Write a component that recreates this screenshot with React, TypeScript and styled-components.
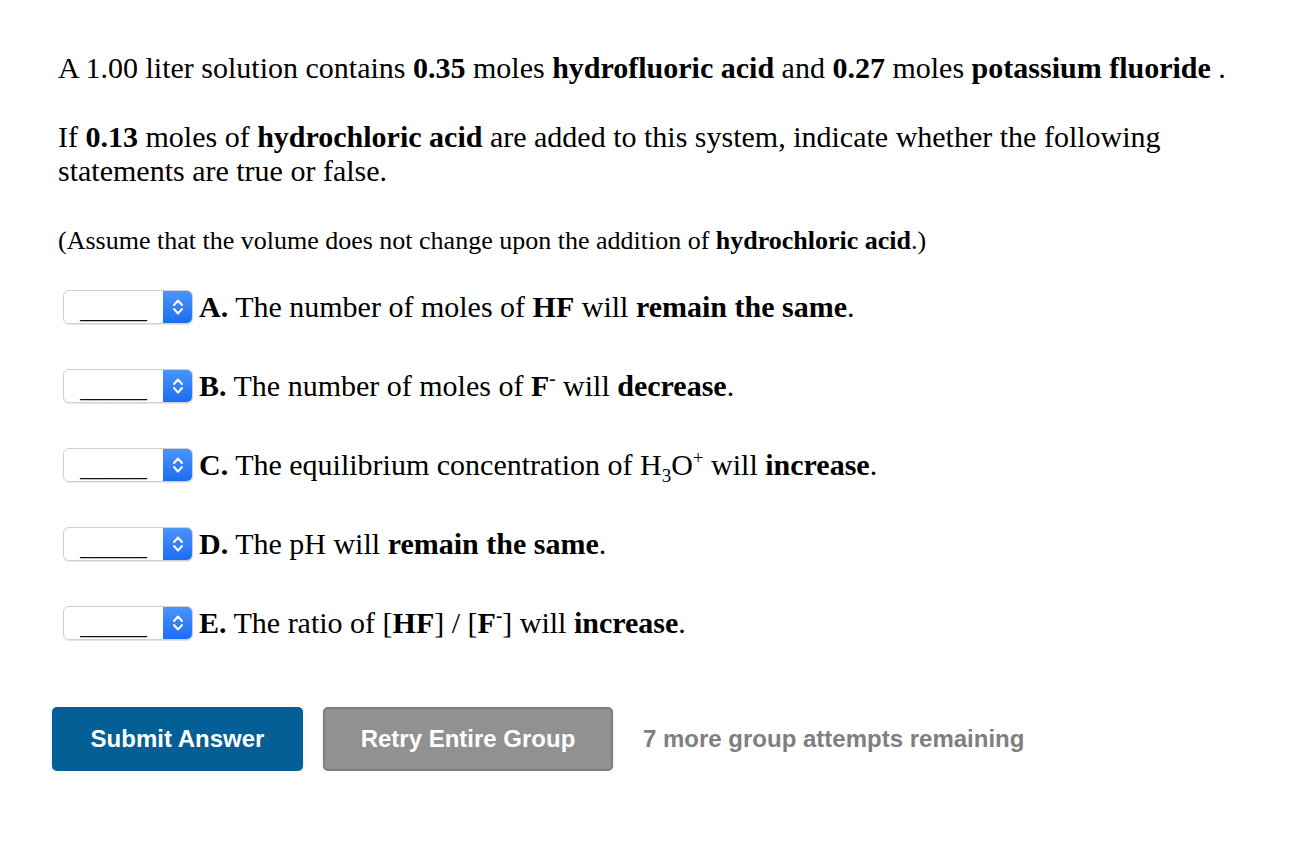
import styled, { createGlobalStyle } from "styled-components";

const GlobalStyle = createGlobalStyle`
  body {
    margin: 0;
    background: #ffffff;
    font-family: "Liberation Serif", "Times New Roman", serif;
    color: #000;
  }
`;

const Page = styled.div`
  padding: 51px 0 0 58px;
  width: 1180px;
`;

const Para = styled.p`
  margin: 0 0 35px;
  font-size: 30px;
  line-height: 34px;
`;

const Note = styled.p`
  margin: 38px 0 0;
  font-size: 26px;
  line-height: 30px;
`;

const List = styled.div`
  display: flex;
  flex-direction: column;
  gap: 45px;
  margin-top: 34px;
`;

const Row = styled.div`
  display: flex;
  align-items: center;
  gap: 6px;
  height: 34px;
`;

const SelectBox = styled.div`
  display: flex;
  width: 130px;
  height: 34px;
  margin-left: 5px;
  box-sizing: border-box;
  border: 1px solid #d0d0d0;
  border-radius: 6px;
  overflow: hidden;
  box-shadow: 0 1px 1px rgba(0, 0, 0, 0.1);
`;

const SelectValue = styled.div`
  flex: 1;
  display: flex;
  align-items: flex-end;
  justify-content: center;
  padding-bottom: 3px;
  font-family: "Liberation Sans", Arial, sans-serif;
  font-size: 20px;
  line-height: 20px;
  color: #111;
`;

const SelectArrow = styled.div`
  width: 29px;
  display: flex;
  align-items: center;
  justify-content: center;
  background: linear-gradient(#4d94fb, #1b6ef2);
`;

const Statement = styled.div`
  font-size: 30px;
  line-height: 34px;
  white-space: nowrap;
`;

const Sup = styled.sup<{ $bold?: boolean }>`
  font-size: 19px;
  line-height: 0;
  font-weight: ${(p) => (p.$bold ? "bold" : "normal")};
`;

const Sub = styled.sub`
  font-size: 19px;
  line-height: 0;
`;

const Actions = styled.div`
  display: flex;
  align-items: center;
  gap: 20px;
  margin-top: 67px;
  margin-left: -6px;
`;

const Button = styled.div<{ $primary?: boolean }>`
  display: flex;
  align-items: center;
  justify-content: center;
  width: ${(p) => (p.$primary ? "251px" : "290px")};
  height: 64px;
  box-sizing: border-box;
  border-radius: 5px;
  font-family: "Liberation Sans", Arial, sans-serif;
  font-weight: bold;
  font-size: 24px;
  color: #fff;
  background: ${(p) => (p.$primary ? "#035f96" : "#919191")};
  border: 2px solid ${(p) => (p.$primary ? "#035f96" : "#7f7f7f")};
  box-shadow: 0 1px 3px rgba(0, 0, 0, 0.15);
`;

const Remaining = styled.div`
  margin-left: 10px;
  font-family: "Liberation Sans", Arial, sans-serif;
  font-weight: bold;
  font-size: 24px;
  color: #7f7f7f;
`;

function Chevrons() {
  return (
    <svg width="14" height="24" viewBox="0 0 14 24">
      <path d="M3 10 L7 5.5 L11 10" stroke="#fff" strokeWidth="2" fill="none" strokeLinecap="round" strokeLinejoin="round" />
      <path d="M3 14 L7 18.5 L11 14" stroke="#fff" strokeWidth="2" fill="none" strokeLinecap="round" strokeLinejoin="round" />
    </svg>
  );
}

function App() {
  const statements = [
    {
      letter: "A.",
      text: (
        <>
          The number of moles of <b>HF</b> will <b>remain the same</b>.
        </>
      ),
    },
    {
      letter: "B.",
      text: (
        <>
          The number of moles of <b>F</b>
          <Sup $bold>-</Sup> will <b>decrease</b>.
        </>
      ),
    },
    {
      letter: "C.",
      text: (
        <>
          The equilibrium concentration of H<Sub>3</Sub>O<Sup>+</Sup> will{" "}
          <b>increase</b>.
        </>
      ),
    },
    {
      letter: "D.",
      text: (
        <>
          The pH will <b>remain the same</b>.
        </>
      ),
    },
    {
      letter: "E.",
      text: (
        <>
          The ratio of [<b>HF</b>] / [<b>F</b>
          <Sup $bold>-</Sup>] will <b>increase</b>.
        </>
      ),
    },
  ];

  return (
    <Page>
      <GlobalStyle />
      <Para>
        A 1.00 liter solution contains <b>0.35</b> moles <b>hydrofluoric acid</b> and{" "}
        <b>0.27</b> moles <b>potassium fluoride</b> .
      </Para>
      <Para>
        If <b>0.13</b> moles of <b>hydrochloric acid</b> are added to this system, indicate
        whether the following statements are true or false.
      </Para>
      <Note>
        (Assume that the volume does not change upon the addition of <b>hydrochloric acid</b>.)
      </Note>
      <List>
        {statements.map((s) => (
          <Row key={s.letter}>
            <SelectBox>
              <SelectValue>______</SelectValue>
              <SelectArrow>
                <Chevrons />
              </SelectArrow>
            </SelectBox>
            <Statement>
              <b>{s.letter}</b> {s.text}
            </Statement>
          </Row>
        ))}
      </List>
      <Actions>
        <Button $primary>Submit Answer</Button>
        <Button>Retry Entire Group</Button>
        <Remaining>7 more group attempts remaining</Remaining>
      </Actions>
    </Page>
  );
}

export default App;
